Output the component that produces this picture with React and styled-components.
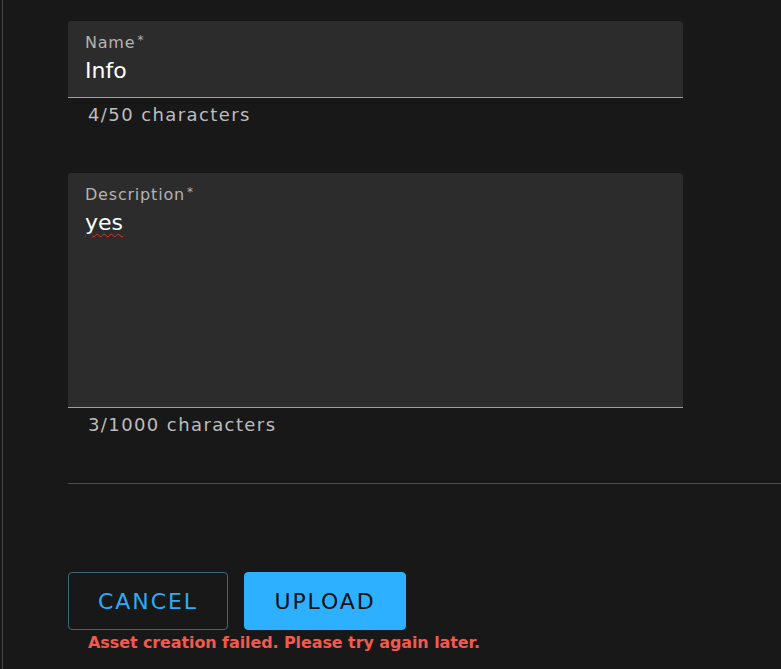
import React from "react";
import styled, { createGlobalStyle } from "styled-components";

const Global = createGlobalStyle`
  html, body { margin: 0; padding: 0; background: #181818; }
  body { font-family: "DejaVu Sans", "Noto Sans", sans-serif; }
  * { box-sizing: border-box; }
`;

const Page = styled.div`
  width: 781px;
  height: 669px;
  overflow: hidden;
  background: #181818;
  display: flex;
`;

const Rail = styled.div`
  width: 2px;
  flex: none;
`;

const Panel = styled.div`
  flex: 1;
  border-left: 1px solid #454545;
  padding: 21px 0 0 65px;
  display: flex;
  flex-direction: column;
`;

const Form = styled.div`
  width: 615px;
  display: flex;
  flex-direction: column;
`;

const Field = styled.div`
  height: ${(p) => p.$h}px;
  background: #2c2c2c;
  border-radius: 4px 4px 0 0;
  border-bottom: 1px solid #a0a0a0;
  padding: 12px 16px 0 17px;
  display: flex;
  flex-direction: column;
`;

const Label = styled.div`
  font-size: 16px;
  line-height: 20px;
  color: #b3b3b3;
  letter-spacing: 0.8px;
  display: flex;
  gap: 2px;
`;

const Star = styled.span`
  font-size: 12px;
  line-height: 14px;
`;

const Value = styled.div`
  margin-top: 4px;
  font-size: 22px;
  line-height: 28px;
  color: #ffffff;
`;

const Spell = styled.span`
  text-decoration: underline wavy #e0302a;
  text-decoration-thickness: 1px;
  text-underline-offset: 3px;
`;

const Helper = styled.div`
  margin-top: 6px;
  padding-left: 20px;
  font-size: 18px;
  line-height: 22px;
  color: #bdbdbd;
  letter-spacing: 1.4px;
  margin-bottom: ${(p) => p.$mb}px;
`;

const Divider = styled.div`
  height: 1px;
  background: #4d4d4d;
  margin-right: -30px;
`;

const Actions = styled.div`
  margin-top: 88px;
  display: flex;
  gap: 16px;
`;

const Button = styled.button`
  width: ${(p) => p.$w}px;
  height: 58px;
  border-radius: 4px;
  font-family: inherit;
  font-size: 22px;
  letter-spacing: 1.9px;
  cursor: pointer;
  border: 1px solid ${(p) => (p.$primary ? "#2cb0ff" : "#3f6679")};
  background: ${(p) => (p.$primary ? "#2cb0ff" : "transparent")};
  color: ${(p) => (p.$primary ? "#121212" : "#2cacf5")};
`;

const Error = styled.div`
  margin-top: 2px;
  padding-left: 20px;
  font-size: 16px;
  line-height: 22px;
  font-weight: 700;
  letter-spacing: -0.1px;
  color: #f2594f;
`;

export default function App() {
  return (
    <>
      <Global />
      <Page>
        <Rail />
        <Panel>
          <Form>
            <Field $h={77}>
              <Label>
                Name<Star>*</Star>
              </Label>
              <Value>Info</Value>
            </Field>
            <Helper $mb={47}>4/50 characters</Helper>
            <Field $h={235}>
              <Label>
                Description<Star>*</Star>
              </Label>
              <Value>
                <Spell>yes</Spell>
              </Value>
            </Field>
            <Helper $mb={47}>3/1000 characters</Helper>
          </Form>
          <Divider />
          <Actions>
            <Button $w={160}>CANCEL</Button>
            <Button $w={162} $primary>
              UPLOAD
            </Button>
          </Actions>
          <Error>Asset creation failed. Please try again later.</Error>
        </Panel>
      </Page>
    </>
  );
}
